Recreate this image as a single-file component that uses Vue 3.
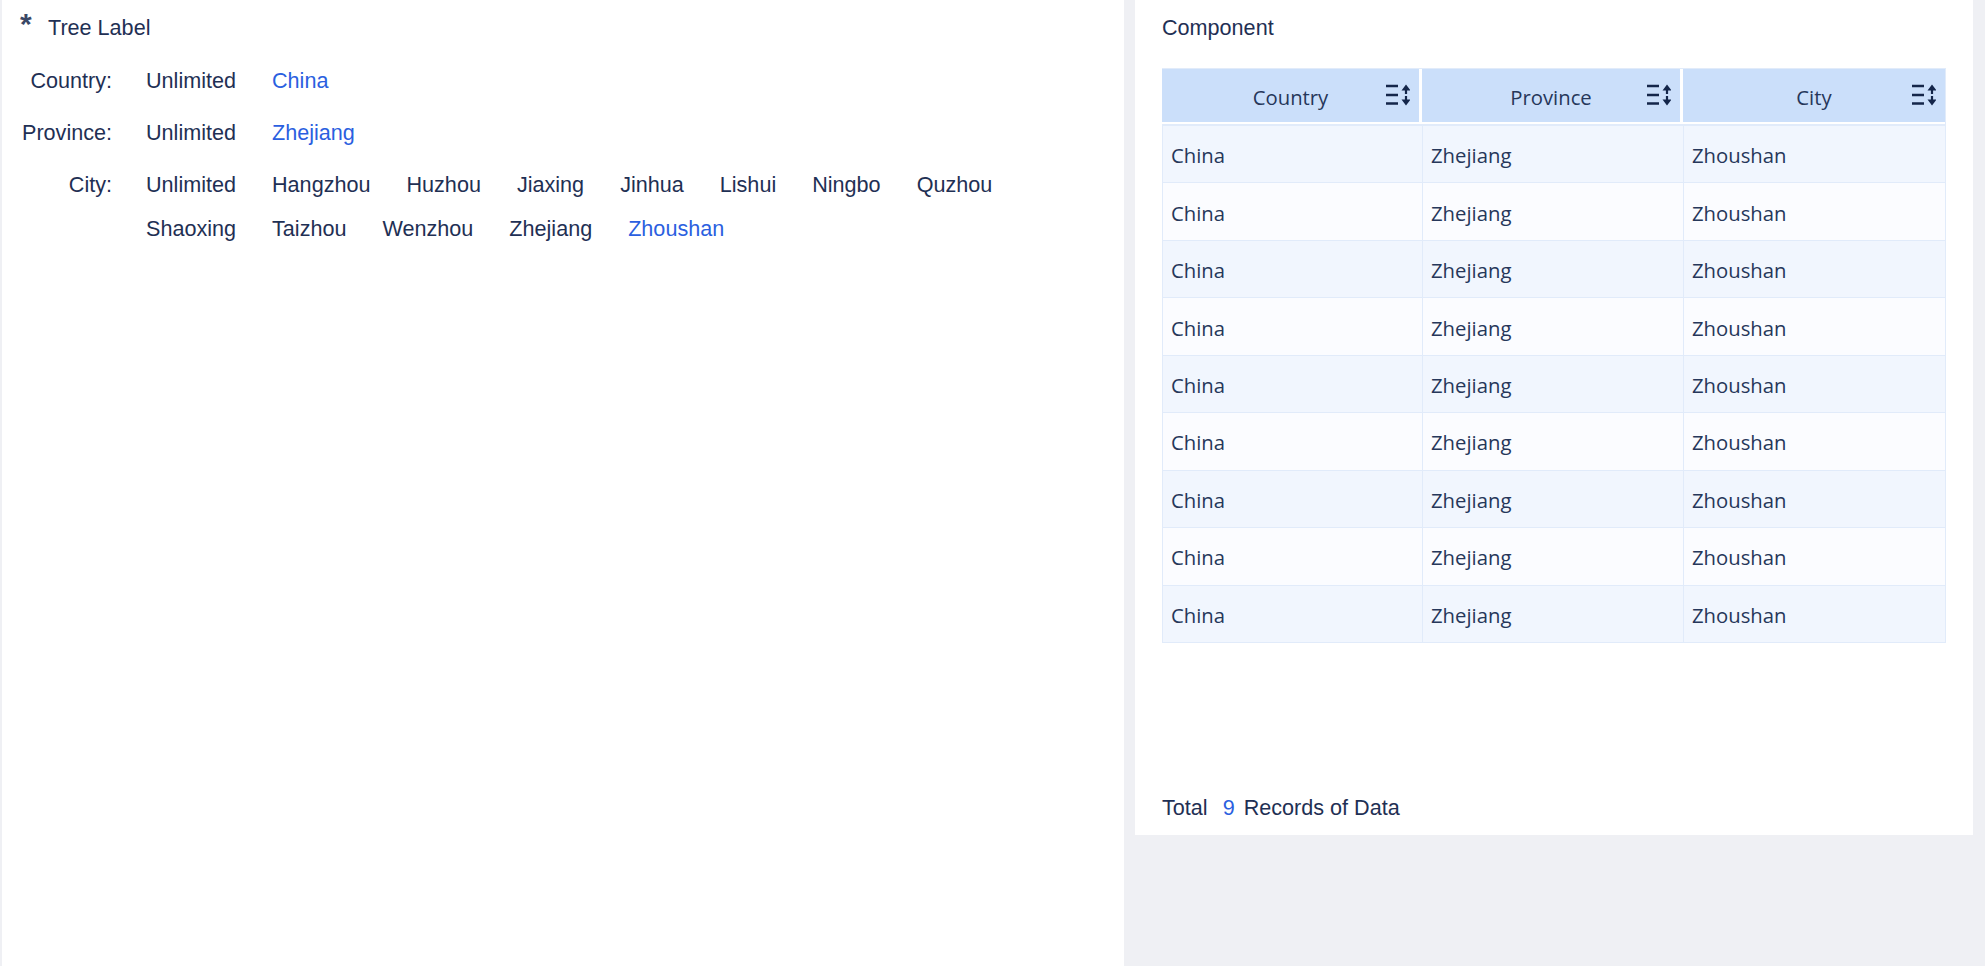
<script setup>
const filters = [
  { label: 'Country:', values: ['Unlimited', 'China'], active: 'China' },
  { label: 'Province:', values: ['Unlimited', 'Zhejiang'], active: 'Zhejiang' },
  {
    label: 'City:',
    values: ['Unlimited', 'Hangzhou', 'Huzhou', 'Jiaxing', 'Jinhua', 'Lishui', 'Ningbo', 'Quzhou', 'Shaoxing', 'Taizhou', 'Wenzhou', 'Zhejiang', 'Zhoushan'],
    active: 'Zhoushan'
  }
]
const columns = ['Country', 'Province', 'City']
const rows = Array.from({ length: 9 }, () => ['China', 'Zhejiang', 'Zhoushan'])
</script>

<template>
  <div class="page">
    <section class="left">
      <div class="tree-title"><span class="star">*</span><span>Tree Label</span></div>
      <div v-for="f in filters" :key="f.label" class="filter">
        <div class="filter-label">{{ f.label }}</div>
        <div class="filter-values">
          <span v-for="v in f.values" :key="v" :class="{ active: v === f.active }">{{ v }}</span>
        </div>
      </div>
    </section>
    <section class="right">
      <div class="comp-title">Component</div>
      <div class="table">
        <div class="head">
          <div v-for="c in columns" :key="c" class="th">
            <span>{{ c }}</span>
            <svg class="sort" width="24" height="22" viewBox="0 0 24 22">
              <path d="M0 2h12M0 11h12M0 19.500h12" stroke="#14264a" stroke-width="2.600" fill="none" />
              <path d="M20 5v5M20 12v5" stroke="#14264a" stroke-width="2.200" fill="none" />
              <path d="M15.500 6.500L20 0.500l4.500 6zM15.500 15.500l4.500 6 4.500-6z" fill="#14264a" />
            </svg>
          </div>
        </div>
        <div v-for="(r, i) in rows" :key="i" class="tr" :class="{ odd: i % 2 === 0 }">
          <div v-for="(cell, j) in r" :key="j" class="td">{{ cell }}</div>
        </div>
      </div>
      <div class="total">Total<span class="num">9</span>Records of Data</div>
    </section>
  </div>
</template>

<style>
html, body { margin: 0; background: #eff0f4; }
</style>

<style scoped>
.page {
  display: flex;
  height: 966px;
  overflow: hidden;
  padding-left: 2px;
  box-sizing: border-box;
  background: #eff0f4;
  color: #1f3054;
  font-family: "Liberation Sans", Arial, sans-serif;
  font-size: 21.6px;
}
.left {
  width: 1122px;
  height: 966px;
  background: #fff;
  padding: 1px 40px 0 0;
  box-sizing: border-box;
}
.tree-title {
  display: flex;
  align-items: center;
  height: 54px;
  padding-left: 18px;
  margin-bottom: 4px;
}
.star {
  width: 28px;
  font-size: 30px;
  font-weight: 700;
  line-height: 30px;
  margin-top: -9px;
  color: #3a4866;
}
.filter {
  display: flex;
  margin-bottom: 8px;
}
.filter-label {
  width: 110px;
  text-align: right;
  line-height: 44px;
  flex: none;
}
.filter-values {
  display: flex;
  flex-wrap: wrap;
  column-gap: 36px;
  margin-left: 34px;
  line-height: 44px;
}
.active { color: #2b5fe0; }
.right {
  width: 838px;
  height: 835px;
  margin-left: 11px;
  background: #fff;
  padding: 0 27px;
  box-sizing: border-box;
  position: relative;
}
.comp-title {
  height: 54px;
  line-height: 56px;
}
.table {
  margin-top: 14px;
  width: 784px;
  font-family: "Open Sans", "Noto Sans", sans-serif;
  font-size: 20.300px;
  color: #26375a;
  border-right: 1px solid #e1ebfa;
  box-sizing: border-box;
}
.head {
  display: grid;
  grid-template-columns: 260px 261px 1fr;
  height: 58px;
  border-bottom: 2px solid #e1ebfa;
  border-top: 1px solid #e1ebfa;
  box-sizing: border-box;
  background: #fff;
}
.th {
  background: #cbdffa;
  border-right: 3px solid #fff;
  border-bottom: 2px solid #fff;
  position: relative;
  display: flex;
  align-items: center;
  justify-content: center;
  padding-top: 2px;
}
.th:last-child { border-right: 0; }
.sort {
  position: absolute;
  right: 9px;
  top: 15px;
}
.tr {
  display: grid;
  grid-template-columns: 260px 261px 1fr;
  height: 57.450px;
  box-sizing: border-box;
  background: #fbfcff;
  border-bottom: 1px solid #e1ebfa;
  border-left: 1px solid #e1ebfa;
}
.tr.odd { background: #f1f6fe; }
.td {
  display: flex;
  align-items: center;
  padding-left: 8px;
  padding-top: 2px;
  border-right: 1px solid #e1ebfa;
}
.td:last-child { border-right: 0; }
.total {
  position: absolute;
  left: 27px;
  top: 786px;
  line-height: 44px;
}
.num {
  color: #2b5fe0;
  margin: 0 9px 0 15px;
}
</style>
